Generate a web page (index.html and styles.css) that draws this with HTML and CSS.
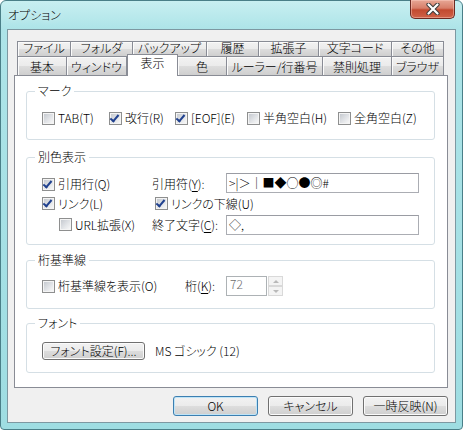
FILE: index.html
```html
<!DOCTYPE html>
<html>
<head>
    <title>オプション</title>
    <meta charset="UTF-8">
    <link rel="stylesheet" href="styles.css">
</head>
<body>
    <div class="window">
        <div class="titlebar">
            <span class="title">オプション</span>
            <span class="close">
                <svg width="14" height="12" viewBox="0 0 14 12">
                    <path d="M2.5 1.5 L11.5 10.5 M11.5 1.5 L2.5 10.5" stroke="#3b3b3b" stroke-width="4.2" stroke-linecap="round"/>
                    <path d="M2.5 1.5 L11.5 10.5 M11.5 1.5 L2.5 10.5" stroke="#ffffff" stroke-width="2.2" stroke-linecap="round"/>
                </svg>
            </span>
        </div>

        <div class="client">
            <div class="tab-row row1">
                <span class="tab">ファイル</span>
                <span class="tab">フォルダ</span>
                <span class="tab">バックアップ</span>
                <span class="tab">履歴</span>
                <span class="tab">拡張子</span>
                <span class="tab">文字コード</span>
                <span class="tab">その他</span>
            </div>
            <div class="tab-row row2">
                <span class="tab">基本</span>
                <span class="tab">ウィンドウ</span>
                <span class="tab active">表示</span>
                <span class="tab">色</span>
                <span class="tab">ルーラー/行番号</span>
                <span class="tab">禁則処理</span>
                <span class="tab">ブラウザ</span>
            </div>

            <div class="panel">
                <!-- マーク -->
                <div class="group g-mark">
                    <span class="group-title">マーク</span>
                    <div class="mark-row">
                        <label class="check"><span class="cb"></span>TAB(T)</label>
                        <label class="check"><span class="cb on"></span>改行(R)</label>
                        <label class="check"><span class="cb on"></span>[EOF](E)</label>
                        <label class="check"><span class="cb"></span>半角空白(H)</label>
                        <label class="check"><span class="cb"></span>全角空白(Z)</label>
                    </div>
                </div>

                <!-- 別色表示 -->
                <div class="group g-color">
                    <span class="group-title">別色表示</span>
                    <div class="color-grid">
                        <label class="check low"><span class="cb on"></span>引用行(Q)</label>
                        <span class="field-label low">引用符(<u>Y</u>):</span>
                        <span class="textbox">&gt;|＞｜■◆○●◎#</span>

                        <label class="check"><span class="cb on"></span>リンク(L)</label>
                        <label class="check span2 indent-s"><span class="cb on"></span>リンクの下線(U)</label>

                        <label class="check indent"><span class="cb"></span>URL拡張(X)</label>
                        <span class="field-label">終了文字(<u>C</u>):</span>
                        <span class="textbox">◇,</span>
                    </div>
                </div>

                <!-- 桁基準線 -->
                <div class="group g-col">
                    <span class="group-title">桁基準線</span>
                    <div class="col-row">
                        <label class="check"><span class="cb"></span>桁基準線を表示(O)</label>
                        <span class="field-label">桁(<u>K</u>):</span>
                        <div class="spin">
                            <span class="spin-input">72</span>
                            <div class="spin-btns">
                                <span class="spin-btn"><i class="arrow up"></i></span>
                                <span class="spin-btn"><i class="arrow down"></i></span>
                            </div>
                        </div>
                    </div>
                </div>

                <!-- フォント -->
                <div class="group g-font">
                    <span class="group-title">フォント</span>
                    <div class="font-row">
                        <span class="btn font-btn">フォント設定(F)...</span>
                        <span>MS ゴシック (12)</span>
                    </div>
                </div>
            </div>

            <div class="buttons">
                <span class="btn default">OK</span>
                <span class="btn">キャンセル</span>
                <span class="btn">一時反映(N)</span>
            </div>
        </div>
    </div>
</body>
</html>
```

FILE: styles.css
```css
body {
    margin: 0;
    width: 463px;
    height: 430px;
    overflow: hidden;
    font-family: "Noto Sans CJK JP", "Noto Sans", sans-serif;
    font-size: 12px;
    font-weight: 300;
    line-height: 14px;
    font-feature-settings: "palt";
    color: #000;
    background: #fff;
}

/* ウィンドウ枠 */
.window {
    width: 463px;
    height: 430px;
    box-sizing: border-box;
    border: 1px solid #4a7f88;
    border-radius: 6px 6px 4px 4px;
    background: linear-gradient(to bottom, #c8eff1 0, #ade4e8 28px, #9edde2 100%);
    display: flex;
    flex-direction: column;
}

.titlebar {
    height: 28px;
    display: flex;
    justify-content: space-between;
    align-items: flex-start;
    padding-left: 7px;
}

.title {
    padding-top: 7px;
    text-shadow: 0 0 6px rgba(255, 255, 255, 0.9);
}

.close {
    margin-top: -1px;
    margin-right: 7px;
    width: 45px;
    height: 19px;
    box-sizing: border-box;
    border: 1px solid #6b2a22;
    border-top: none;
    border-radius: 0 0 5px 5px;
    background: linear-gradient(to bottom, #e7a795 0, #d77e69 45%, #c24a30 55%, #cf6248 100%);
    box-shadow: inset 0 0 0 1px rgba(255, 210, 200, 0.45);
    display: flex;
    align-items: center;
    justify-content: center;
}

.client {
    flex: 1;
    margin: 0 6px 6px 6px;
    border: 1px solid #7d98a1;
    background: #f0f0f0;
    padding: 11px 7px 0 6px;
    display: flex;
    flex-direction: column;
}

/* タブ */
.tab-row {
    display: grid;
    margin-left: 3px;
}

.row1 {
    grid-template-columns: 54px 62px 74px 52px 60px 73px 52px;
}

.row2 {
    grid-template-columns: 50px 60px 51px 49px 96px 69px 52px;
}

.tab {
    box-sizing: border-box;
    text-align: center;
    white-space: nowrap;
    border-top: 1px solid #898c95;
    border-right: 1px solid #898c95;
    background: linear-gradient(to bottom, #f2f2f2 0%, #ebebeb 50%, #dddddd 50%, #cfcfcf 100%);
    box-shadow: inset 1px 1px 0 #fbfbfb;
}

.tab:first-child {
    border-left: 1px solid #898c95;
}

.row1 .tab {
    height: 15px;
    line-height: 12px;
}

.row2 .tab {
    height: 19px;
    padding-top: 3px;
}

.row2 .tab.active {
    position: relative;
    z-index: 1;
    height: 22px;
    margin-top: -2px;
    margin-bottom: -1px;
    padding-top: 1px;
    border-left: 1px solid #898c95;
    background: #fff;
    box-shadow: none;
}

.panel {
    height: 313px;
    box-sizing: border-box;
    background: #fff;
    border: 1px solid #898c95;
    padding: 15px 12px 0 11px;
}

/* グループボックス */
.group {
    position: relative;
    border: 1px solid #d5dfe5;
    border-radius: 3px;
    padding-left: 15px;
}

.group-title {
    position: absolute;
    top: -8px;
    left: 8px;
    padding: 0 3px;
    background: #fff;
}

.g-mark {
    padding-top: 18px;
    padding-bottom: 13px;
}

.g-color {
    margin-top: 17px;
    padding-top: 14px;
    padding-bottom: 9px;
}

.g-col {
    margin-top: 15px;
    padding-top: 15px;
    padding-bottom: 12px;
}

.g-font {
    margin-top: 14px;
    padding-top: 18px;
    padding-bottom: 12px;
}

/* チェックボックス */
.check {
    display: flex;
    align-items: center;
    gap: 3px;
    white-space: nowrap;
}

.cb {
    width: 13px;
    height: 13px;
    flex: none;
    box-sizing: border-box;
    border: 1px solid #8e8f8f;
    padding: 1px;
    background: linear-gradient(135deg, #c6cad0 0%, #e4e6e9 60%, #f7f7f7 100%) content-box, #f4f4f4;
    position: relative;
}

.cb.on::after {
    content: "";
    position: absolute;
    left: 2px;
    top: 0px;
    width: 3px;
    height: 7px;
    border-right: 2px solid #20418f;
    border-bottom: 2px solid #20418f;
    transform: rotate(40deg);
}

.mark-row {
    display: grid;
    grid-template-columns: 67px 66px 72px 91px auto;
    height: 16px;
    align-items: center;
}

.color-grid {
    display: grid;
    grid-template-columns: 110px 74px 193px;
    grid-template-rows: 21px 21px 21px;
    align-items: center;
}

.low {
    padding-top: 3px;
}

.span2 {
    grid-column: span 2;
}

.indent-s {
    padding-left: 3px;
}

.indent {
    padding-left: 17px;
}

.field-label {
    white-space: nowrap;
}

.field-label u {
    text-underline-offset: 2px;
}

.textbox {
    height: 20px;
    box-sizing: border-box;
    border: 1px solid #abadb3;
    border-top-color: #9a9ca3;
    background: #fff;
    padding: 2px 3px 0 2px;
    white-space: nowrap;
    font-feature-settings: normal;
}

.col-row {
    display: grid;
    grid-template-columns: 143px 41px auto;
    height: 20px;
    align-items: center;
}

.spin {
    display: flex;
    gap: 1px;
}

.spin-input {
    width: 41px;
    height: 20px;
    box-sizing: border-box;
    border: 1px solid #adb2b5;
    padding: 0 0 0 3px;
    color: #6d6d6d;
    background: #fff;
}

.spin-btns {
    display: flex;
    flex-direction: column;
}

.spin-btn {
    width: 15px;
    height: 10px;
    box-sizing: border-box;
    border: 1px solid #d9d9d9;
    background: #f4f4f4;
    display: flex;
    align-items: center;
    justify-content: center;
}

.arrow {
    width: 0;
    height: 0;
    border-left: 3px solid transparent;
    border-right: 3px solid transparent;
}

.arrow.up {
    border-bottom: 3px solid #b9b9b9;
}

.arrow.down {
    border-top: 3px solid #b9b9b9;
}

.font-row {
    display: flex;
    align-items: center;
    gap: 10px;
}

/* ボタン */
.btn {
    box-sizing: border-box;
    height: 20px;
    border: 1px solid #707070;
    border-radius: 3px;
    background: linear-gradient(to bottom, #f2f2f2 0%, #ebebeb 50%, #dddddd 50%, #cfcfcf 100%);
    box-shadow: inset 0 0 0 1px #fbfbfb;
    text-align: center;
    line-height: 17px;
    white-space: nowrap;
}

.font-btn {
    width: 103px;
    height: 18px;
    line-height: 16px;
}

.buttons {
    display: flex;
    justify-content: flex-end;
    gap: 10px;
    margin-top: 8px;
}

.buttons .btn {
    width: 85px;
}

.btn.default {
    border-color: #3c7fb1;
    box-shadow: inset 0 0 0 1px #bfe4f7;
}
```
